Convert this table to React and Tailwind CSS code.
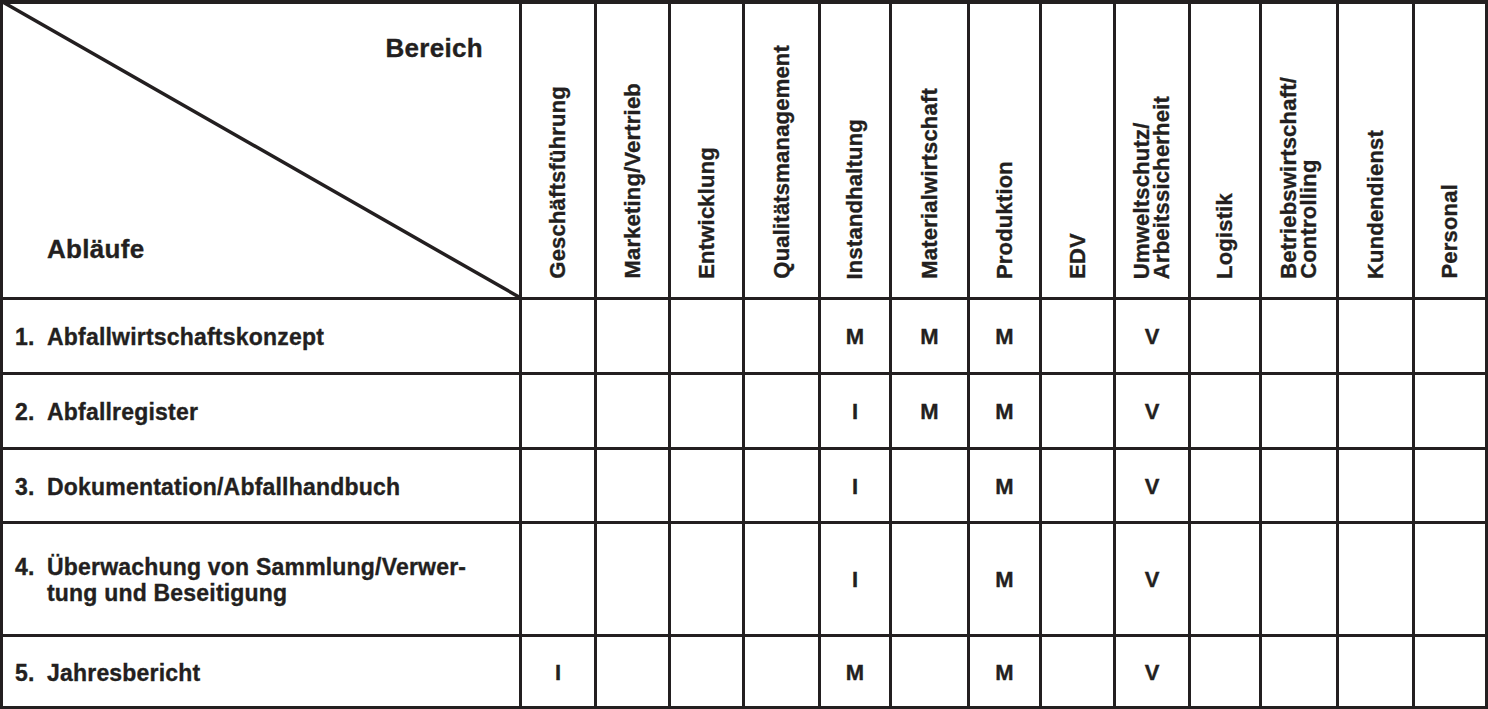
const INK = '#231f20'

const bereiche = [
  ['Geschäftsführung'],
  ['Marketing/Vertrieb'],
  ['Entwicklung'],
  ['Qualitätsmanagement'],
  ['Instandhaltung'],
  ['Materialwirtschaft'],
  ['Produktion'],
  ['EDV'],
  ['Umweltschutz/', 'Arbeitssicherheit'],
  ['Logistik'],
  ['Betriebswirtschaft/', 'Controlling'],
  ['Kundendienst'],
  ['Personal'],
]

// index into bereiche -> marker
const ablaeufe = [
  { nr: '1.', text: ['Abfallwirtschaftskonzept'], marks: { 4: 'M', 5: 'M', 6: 'M', 8: 'V' } },
  { nr: '2.', text: ['Abfallregister'], marks: { 4: 'I', 5: 'M', 6: 'M', 8: 'V' } },
  { nr: '3.', text: ['Dokumentation/Abfallhandbuch'], marks: { 4: 'I', 6: 'M', 8: 'V' } },
  { nr: '4.', text: ['Überwachung von Sammlung/Verwer-', 'tung und Beseitigung'], marks: { 4: 'I', 6: 'M', 8: 'V' } },
  { nr: '5.', text: ['Jahresbericht'], marks: { 0: 'I', 4: 'M', 6: 'M', 8: 'V' } },
]

export default function App() {
  return (
    <div className="w-[1488px] h-[709px] bg-white font-['Liberation_Sans',Arial,sans-serif] font-bold text-[#231f20] [-webkit-text-stroke:0.35px_#231f20]">
      <div className="grid grid-cols-[516px_72px_71px_71px_73px_68px_75px_69px_71px_72px_68px_74px_73px_70px] grid-rows-[293px_72px_72px_71px_110px_69px] gap-[3px] bg-[#231f20] pt-[4px] px-[3px] pb-[3px]">
        {/* corner cell */}
        <div className="relative bg-white flex flex-col justify-between">
          <svg className="absolute inset-0 w-full h-full overflow-visible">
            <line x1="-2" y1="-3" x2="100%" y2="100%" stroke={INK} strokeWidth="3.5" />
          </svg>
          <div className="self-end pt-[31px] pr-[36px] text-[26px] leading-[26px] tracking-[0.3px]">Bereich</div>
          <div className="pl-[44px] pb-[35px] text-[26px] leading-[26px] tracking-[0.3px]">Abläufe</div>
        </div>

        {bereiche.map(lines => (
          <div key={lines.join('')} className="bg-white flex items-end justify-center pb-[18px]">
            <div className="[writing-mode:vertical-rl] rotate-180 text-[22px] leading-[20px] tracking-[0.2px] whitespace-nowrap">
              {lines.map(l => <div key={l}>{l}</div>)}
            </div>
          </div>
        ))}

        {ablaeufe.map(row => (
          <Row key={row.nr} row={row} />
        ))}
      </div>
    </div>
  )
}

function Row({ row }) {
  return (
    <>
      <div className="bg-white flex items-center pl-[12px] pt-[2px] text-[23px] leading-[26px] tracking-[0.2px]">
        <div className="flex">
          <span className="w-[32px] shrink-0">{row.nr}</span>
          <div>
            {row.text.map(t => <div key={t}>{t}</div>)}
          </div>
        </div>
      </div>
      {bereiche.map((_, i) => (
        <div key={i} className="bg-white flex items-center justify-center pt-[2px] text-[22px] leading-none">
          {row.marks[i] || ''}
        </div>
      ))}
    </>
  )
}
